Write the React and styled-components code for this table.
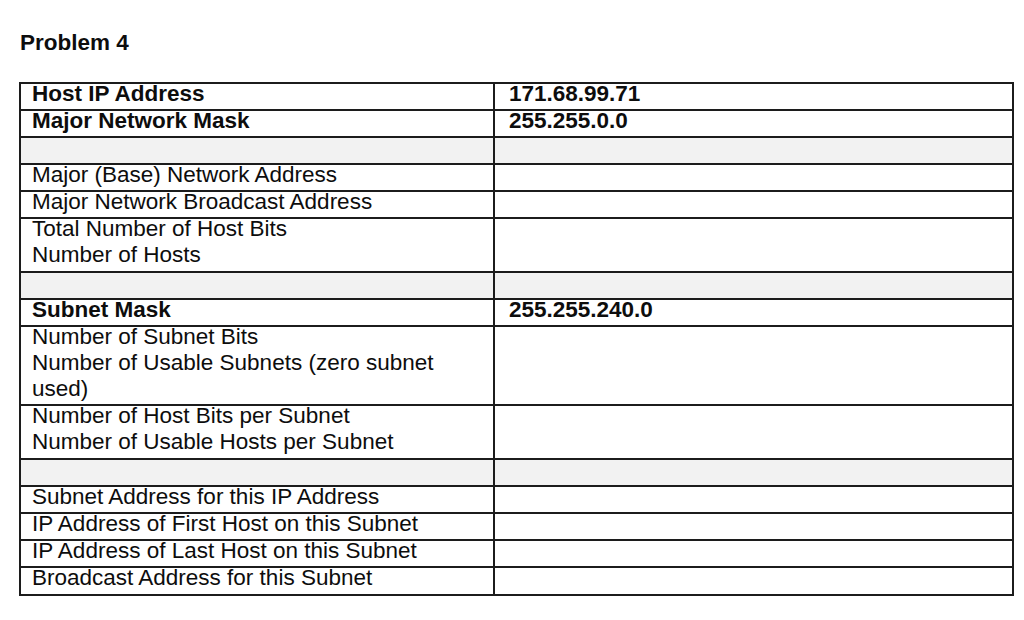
import styled, { createGlobalStyle } from 'styled-components';

const GlobalStyle = createGlobalStyle`
  html, body {
    margin: 0;
    padding: 0;
    background: #ffffff;
  }
  body {
    font-family: "Liberation Sans", Arial, sans-serif;
    color: #0d0d0d;
  }
`;

const Page = styled.div`
  width: 1024px;
  height: 620px;
  box-sizing: border-box;
  padding: 30px 11px 0 19px;
  overflow: hidden;
`;

const Heading = styled.h2`
  margin: 0 0 26px 1px;
  font-size: 22.5px;
  line-height: 26px;
  font-weight: bold;
`;

const Sheet = styled.table`
  width: 993px;
  border-collapse: collapse;
  table-layout: fixed;
  font-size: 22.5px;
`;

const Row = styled.tr`
  background: ${p => (p.$shaded ? '#f2f2f2' : '#ffffff')};
`;

const Cell = styled.td`
  border: 2px solid #1c1c1c;
  padding: 0 11px;
  vertical-align: top;
`;

const Text = styled.div`
  line-height: 26px;
  margin: -3px 0 ${p => (p.$tall ? '3px' : '2px')};
  font-weight: ${p => (p.$bold ? 'bold' : 'normal')};
  padding-left: ${p => (p.$value ? '3px' : '0')};
`;

const rows = [
  { label: ['Host IP Address'], value: '171.68.99.71', bold: true },
  { label: ['Major Network Mask'], value: '255.255.0.0', bold: true },
  { shaded: true },
  { label: ['Major (Base) Network Address'] },
  { label: ['Major Network Broadcast Address'] },
  { label: ['Total Number of Host Bits', 'Number of Hosts'] },
  { shaded: true },
  { label: ['Subnet Mask'], value: '255.255.240.0', bold: true },
  { label: ['Number of Subnet Bits', 'Number of Usable Subnets (zero subnet', 'used)'] },
  { label: ['Number of Host Bits per Subnet', 'Number of Usable Hosts per Subnet'] },
  { shaded: true },
  { label: ['Subnet Address for this IP Address'] },
  { label: ['IP Address of First Host on this Subnet'] },
  { label: ['IP Address of Last Host on this Subnet'] },
  { label: ['Broadcast Address for this Subnet'] },
];

export default function App() {
  return (
    <>
      <GlobalStyle />
      <Page>
        <Heading>Problem 4</Heading>
        <Sheet>
          <colgroup>
            <col style={{ width: '474px' }} />
            <col style={{ width: '519px' }} />
          </colgroup>
          <tbody>
            {rows.map((r, i) => {
              const tall = i === rows.length - 1 || (r.label && r.label.length === 2);
              return (
                <Row key={i} $shaded={r.shaded}>
                  <Cell>
                    <Text $bold={r.bold} $tall={tall}>
                      {r.label
                        ? r.label.map((l, j) => (
                            <span key={j}>
                              {j > 0 && <br />}
                              {l}
                            </span>
                          ))
                        : '\u00a0'}
                    </Text>
                  </Cell>
                  <Cell>
                    <Text $bold $value $tall={tall}>{r.value || '\u00a0'}</Text>
                  </Cell>
                </Row>
              );
            })}
          </tbody>
        </Sheet>
      </Page>
    </>
  );
}
